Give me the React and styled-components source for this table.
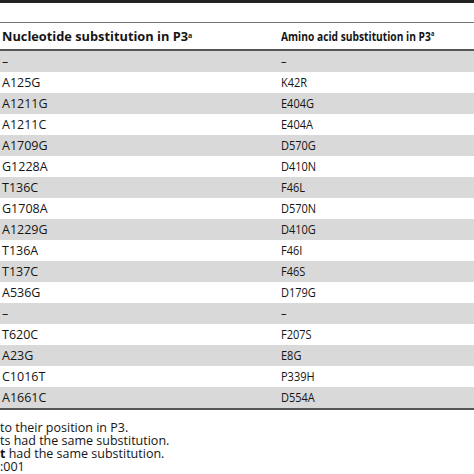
import React from "react";
import styled, { createGlobalStyle } from "styled-components";

const Global = createGlobalStyle`
  html, body { margin: 0; padding: 0; background: #fff; }
  body { font-family: "Open Sans", "Noto Sans", sans-serif; color: #151515; }
`;

const Page = styled.div`
  width: 474px;
  height: 474px;
  overflow: hidden;
  background: #fff;
`;

const TopBar = styled.div`
  height: 3px;
  background: #222;
  margin-bottom: 19px;
`;

const Table = styled.div`
  display: grid;
  grid-template-columns: 281px 1fr;
  border-top: 1px solid #777;
  border-bottom: 2px solid #555;
`;

const HeadCell = styled.div`
  height: 26px;
  display: flex;
  align-items: center;
  padding-left: ${(p) => (p.$first ? "2px" : "0")};
  font-weight: 700;
  font-size: 12.8px;
  border-bottom: 2px solid #555;
  white-space: nowrap;
`;

const Cell = styled.div`
  height: 21px;
  display: flex;
  align-items: center;
  padding-left: ${(p) => (p.$first ? "2px" : "0")};
  font-size: 12.5px;
  background: ${(p) => (p.$shade ? "#d9d9d9" : "#fff")};
  white-space: nowrap;
`;

const Narrow = styled.span`
  display: inline-block;
  transform: scaleX(${(p) => p.$k || 0.8});
  transform-origin: left center;
`;

const Sup = styled.sup`
  font-size: 7px;
  vertical-align: 5px;
  line-height: 0;
`;

const Notes = styled.div`
  padding-top: 11px;
  font-size: 12.5px;
  line-height: 13px;
  white-space: nowrap;
`;

const B = styled.b`
  font-weight: 700;
`;

const rows = [
  ["–", "–"],
  ["A125G", "K42R"],
  ["A1211G", "E404G"],
  ["A1211C", "E404A"],
  ["A1709G", "D570G"],
  ["G1228A", "D410N"],
  ["T136C", "F46L"],
  ["G1708A", "D570N"],
  ["A1229G", "D410G"],
  ["T136A", "F46I"],
  ["T137C", "F46S"],
  ["A536G", "D179G"],
  ["–", "–"],
  ["T620C", "F207S"],
  ["A23G", "E8G"],
  ["C1016T", "P339H"],
  ["A1661C", "D554A"],
];

export default function App() {
  return (
    <Page>
      <Global />
      <TopBar />
      <Table>
        <HeadCell $first>
          Nucleotide substitution in P3<Sup>a</Sup>
        </HeadCell>
        <HeadCell>
          <Narrow $k={0.8}>
            Amino acid substitution in P3<Sup>a</Sup>
          </Narrow>
        </HeadCell>
        {rows.map((r, i) => (
          <React.Fragment key={i}>
            <Cell $first $shade={i % 2 === 0}>
              {r[0]}
            </Cell>
            <Cell $shade={i % 2 === 0}>
              <Narrow $k={0.88}>{r[1]}</Narrow>
            </Cell>
          </React.Fragment>
        ))}
      </Table>
      <Notes>
        <div>to their position in P3.</div>
        <div>ts had the same substitution.</div>
        <div>
          <B>t</B> had the same substitution.
        </div>
        <div>:001</div>
      </Notes>
    </Page>
  );
}
